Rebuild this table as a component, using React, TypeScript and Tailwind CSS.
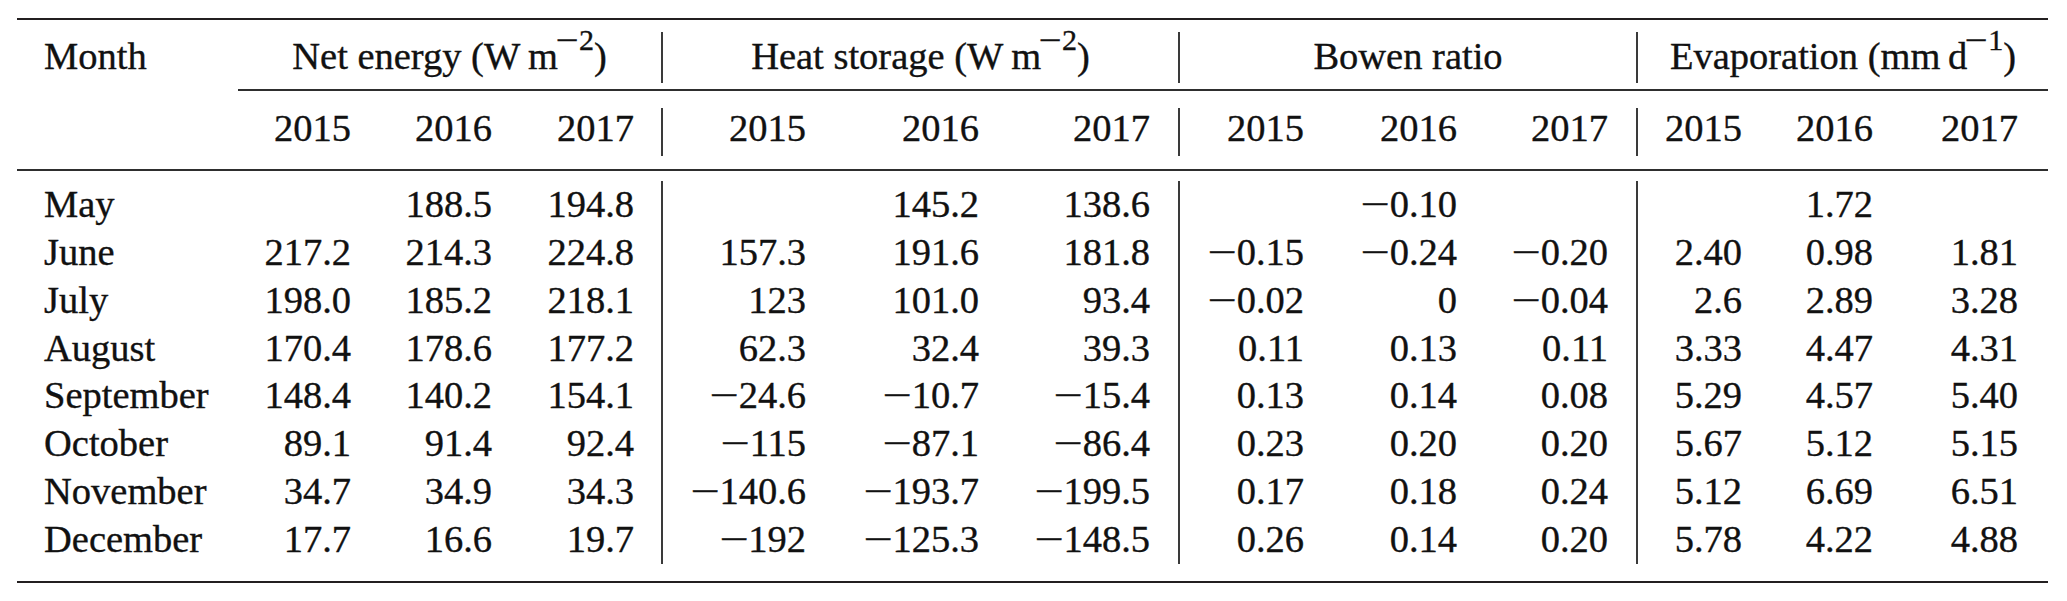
import React from "react";

type Row = { month: string; values: string[] };

const rows: Row[] = [
  { month: "May", values: ["", "188.5", "194.8", "", "145.2", "138.6", "", "−0.10", "", "", "1.72", ""] },
  { month: "June", values: ["217.2", "214.3", "224.8", "157.3", "191.6", "181.8", "−0.15", "−0.24", "−0.20", "2.40", "0.98", "1.81"] },
  { month: "July", values: ["198.0", "185.2", "218.1", "123", "101.0", "93.4", "−0.02", "0", "−0.04", "2.6", "2.89", "3.28"] },
  { month: "August", values: ["170.4", "178.6", "177.2", "62.3", "32.4", "39.3", "0.11", "0.13", "0.11", "3.33", "4.47", "4.31"] },
  { month: "September", values: ["148.4", "140.2", "154.1", "−24.6", "−10.7", "−15.4", "0.13", "0.14", "0.08", "5.29", "4.57", "5.40"] },
  { month: "October", values: ["89.1", "91.4", "92.4", "−115", "−87.1", "−86.4", "0.23", "0.20", "0.20", "5.67", "5.12", "5.15"] },
  { month: "November", values: ["34.7", "34.9", "34.3", "−140.6", "−193.7", "−199.5", "0.17", "0.18", "0.24", "5.12", "6.69", "6.51"] },
  { month: "December", values: ["17.7", "16.6", "19.7", "−192", "−125.3", "−148.5", "0.26", "0.14", "0.20", "5.78", "4.22", "4.88"] },
];

// LaTeX math minus is wider than the text one
const Num = ({ v }: { v: string }) => {
  if (v.startsWith("−")) {
    return (
      <span>
        <span className="inline-block origin-right scale-x-[1.35]">−</span>
        {v.slice(1)}
      </span>
    );
  }
  return <span>{v}</span>;
};

const Sup = ({ v }: { v: string }) => (
  <sup className="text-[0.78em] top-[-0.62em] ml-[4px]">
    <Num v={v} />
  </sup>
);

// one block per column group; widths line up the right edges of the year columns
const groups = [
  {
    key: "net",
    title: <>Net energy (W{"\u2009"}m<Sup v="−2" />)</>,
    bar: "",
    cols: "grid grid-cols-[113px_141px_142px]",
  },
  {
    key: "heat",
    title: <>Heat storage (W{"\u2009"}m<Sup v="−2" />)</>,
    bar: "border-l-2 border-[#3a3a3a]",
    cols: "grid grid-cols-[143px_173px_171px]",
  },
  {
    key: "bowen",
    title: <>Bowen ratio</>,
    bar: "border-l-2 border-[#3a3a3a]",
    cols: "grid grid-cols-[124px_153px_151px]",
  },
  {
    key: "evap",
    title: <>Evaporation (mm{"\u2009"}d<Sup v="−1" />)</>,
    bar: "border-l-2 border-[#3a3a3a]",
    cols: "grid grid-cols-[104px_131px_145px]",
  },
];

const years = ["2015", "2016", "2017"];

const sectionCols = "grid grid-cols-[221px_423px_517px_458px_412px]";

const App: React.FC = () => {
  return (
    <div className="w-[2067px] h-[601px] bg-white pl-[17px] pt-[18px] text-[#111] [-webkit-text-stroke:0.35px_#111] text-[38.5px] font-[Liberation_Serif,Times_New_Roman,serif]">
      <div className="w-[2031px]">
        {/* header row 1 */}
        <div className={`${sectionCols} border-t-2 border-[#231f20]`}>
          <div className="pl-[27px] pt-[12px] leading-[48.6px]">Month</div>
          {groups.map((g) => (
            <div key={g.key} className="border-b-2 border-[#2e2e2e] pt-[12px] pb-[6px]">
              <div className={`h-[51px] text-center leading-[48.6px] whitespace-nowrap ${g.bar}`}>
                {g.title}
              </div>
            </div>
          ))}
        </div>

        {/* header row 2 */}
        <div className={`${sectionCols} border-b-2 border-[#2e2e2e]`}>
          <div />
          {groups.map((g) => (
            <div key={g.key} className="pt-[17px] pb-[13px]">
              <div className={`h-[48px] leading-[41.4px] ${g.bar}`}>
                <div className={g.cols}>
                  {years.map((y) => (
                    <div key={y} className="text-right">
                      {y}
                    </div>
                  ))}
                </div>
              </div>
            </div>
          ))}
        </div>

        {/* body */}
        <div className="pt-[10px] pb-[17px] border-b-2 border-[#231f20]">
          {rows.map((row) => (
            <div key={row.month} className={`${sectionCols} h-[47.86px] leading-[47.86px]`}>
              <div className="pl-[27px] whitespace-nowrap">{row.month}</div>
              {groups.map((g, gi) => (
                <div key={g.key} className={g.bar}>
                  <div className={g.cols}>
                    {row.values.slice(gi * 3, gi * 3 + 3).map((v, i) => (
                      <div key={i} className="text-right whitespace-nowrap">
                        <Num v={v} />
                      </div>
                    ))}
                  </div>
                </div>
              ))}
            </div>
          ))}
        </div>
      </div>
    </div>
  );
};

export default App;
